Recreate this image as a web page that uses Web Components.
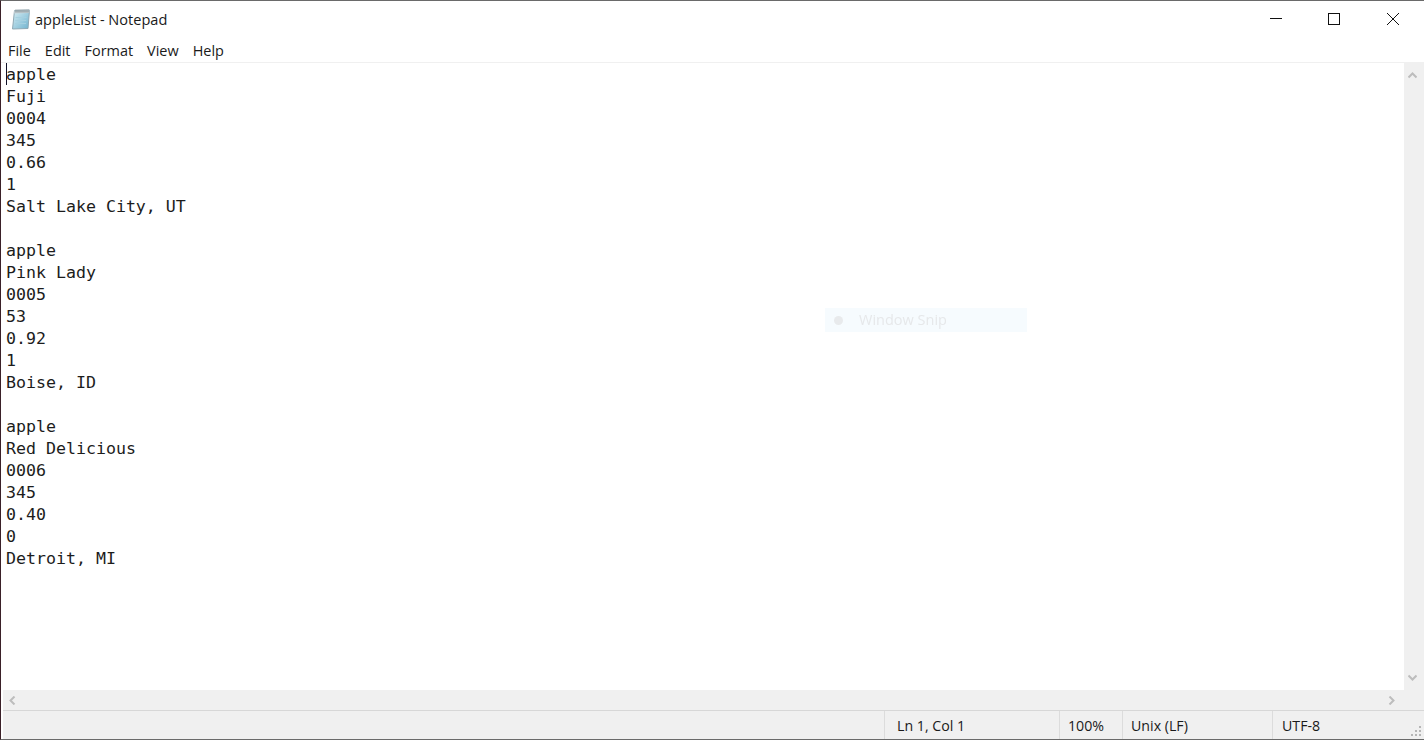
<!DOCTYPE html>
<html>
<head>
<meta charset="utf-8">
<title>appleList - Notepad</title>
<style>
  html, body { margin: 0; padding: 0; height: 100%; background: #fff; overflow: hidden; }
</style>
</head>
<body>
<notepad-window>
  <title-bar slot="title" label="appleList - Notepad"></title-bar>
  <menu-bar slot="menu">
    <span>File</span><span>Edit</span><span>Format</span><span>View</span><span>Help</span>
  </menu-bar>
  <text-area slot="editor">apple
Fuji
0004
345
0.66
1
Salt Lake City, UT

apple
Pink Lady
0005
53
0.92
1
Boise, ID

apple
Red Delicious
0006
345
0.40
0
Detroit, MI</text-area>
  <status-bar slot="status"></status-bar>
</notepad-window>

<script>
class NotepadWindow extends HTMLElement {
  constructor() {
    super();
    this.attachShadow({ mode: 'open' });
    this.shadowRoot.innerHTML = `
      <style>
        :host {
          display: flex;
          flex-direction: column;
          box-sizing: border-box;
          width: 1424px;
          height: 740px;
          border-top: 1px solid #6a6a6a;
          border-left: 1px solid #3a2028;
          border-bottom: 1px solid #6a6a6a;
          background: #fff;
          font-family: "Open Sans", "Noto Sans", sans-serif;
          color: #1a1a1a;
        }
      </style>
      <slot name="title"></slot>
      <slot name="menu"></slot>
      <slot name="editor"></slot>
      <slot name="status"></slot>
    `;
  }
}

class TitleBar extends HTMLElement {
  constructor() {
    super();
    this.attachShadow({ mode: 'open' });
    this.shadowRoot.innerHTML = `
      <style>
        :host {
          display: flex;
          align-items: center;
          height: 38px;
          flex: none;
        }
        .icon { margin-left: 10px; width: 20px; height: 22px; flex: none; position: relative; top: -1px; }
        .label { margin-left: 4px; font-size: 14.55px; position: relative; top: -1px; flex: 1; }
        .btns { display: flex; height: 36px; align-self: flex-start; padding-right: 2px; }
        .btn { display: flex; align-items: center; justify-content: center; }
        .btn svg { width: 14px; height: 14px; }
      </style>
      <svg class="icon" viewBox="0 0 20 22">
        <defs>
          <linearGradient id="page" x1="0" y1="0" x2="1" y2="1">
            <stop offset="0" stop-color="#d8eff5"/>
            <stop offset="1" stop-color="#6fb2ce"/>
          </linearGradient>
        </defs>
        <path d="M3.5 2.5 L18.5 2 L17 20.5 L1.5 21 Z" fill="url(#page)" stroke="#8fa9b5" stroke-width="1"/>
        <path d="M3.5 2.5 L18.5 2 L18.2 5 L3.2 5.5 Z" fill="#c9d4d8"/>
        <path d="M5 1.5v3M7 1.5v3M9 1.5v3M11 1.5v3M13 1.5v3M15 1.5v3M17 1.5v3" stroke="#7d8a90" stroke-width="1"/>
        <path d="M4.5 9.5H15.5M4.2 12.5H15.2M4 15.5H15" stroke="#a5d0e0" stroke-width="1"/>
      </svg>
      <span class="label"></span>
      <div class="btns">
        <div class="btn" style="width:56px"><svg viewBox="0 0 14 14"><path d="M1 6.5H13" stroke="#111" stroke-width="1" fill="none"/></svg></div>
        <div class="btn" style="width:60px"><svg viewBox="0 0 14 14"><rect x="1.5" y="1.5" width="11" height="11" stroke="#111" stroke-width="1" fill="none"/></svg></div>
        <div class="btn" style="width:58px"><svg viewBox="0 0 14 14"><path d="M1 1L13 13M13 1L1 13" stroke="#111" stroke-width="1" fill="none"/></svg></div>
      </div>
    `;
    this.shadowRoot.querySelector('.label').textContent = this.getAttribute('label');
  }
}

class MenuBar extends HTMLElement {
  constructor() {
    super();
    this.attachShadow({ mode: 'open' });
    this.shadowRoot.innerHTML = `
      <style>
        :host {
          display: flex;
          flex: none;
          align-items: center;
          height: 23px;
          padding-left: 7px;
          gap: 14px;
          font-size: 14.45px;
          border-bottom: 1px solid #f0f0f0;
        }
      </style>
      <slot></slot>
    `;
  }
}

class TextArea extends HTMLElement {
  constructor() {
    super();
    this.attachShadow({ mode: 'open' });
    this.shadowRoot.innerHTML = `
      <style>
        :host {
          display: grid;
          flex: 1;
          min-height: 0;
          grid-template-columns: 1fr 20px;
          grid-template-rows: 1fr 20px;
        }
        .text {
          position: relative;
          padding: 1px 0 0 5px;
          overflow: hidden;
          font-family: "DejaVu Sans Mono", "Liberation Mono", monospace;
          font-size: 16.6px;
          line-height: 22px;
          white-space: pre;
          color: #1c1c1c;
        }
        .caret { position: absolute; left: 5px; top: 0; width: 1px; height: 22px; background: #101028; }
        .snip {
          position: absolute;
          left: 824px;
          top: 245px;
          width: 202px;
          height: 24px;
          display: flex;
          align-items: center;
          background: #f6fbfe;
          font-family: "Open Sans", sans-serif;
          font-size: 14.5px;
          line-height: 24px;
          color: #e6e8ea;
        }
        .snip span { filter: blur(0.6px); }
        .dot { width: 9px; height: 9px; border-radius: 50%; background: #e8eaec; margin: 0 16px 0 9px; }
        .vbar, .hbar, .corner { background: #f0f0f0; }
        .vbar { display: flex; flex-direction: column; justify-content: space-between; align-items: center; padding: 8px 3px 8px 0; box-sizing: border-box; }
        .hbar { display: flex; justify-content: space-between; align-items: center; padding: 0 8px 0 5px; margin-left: 2px; }
        svg { display: block; width: 9px; height: 9px; }
      </style>
      <div class="text"><span class="caret"></span><slot></slot><div class="snip"><span class="dot"></span><span>Window Snip</span></div></div>
      <div class="vbar">
        <svg viewBox="0 0 9 9"><path d="M0.5 6.5L4.5 2.5L8.5 6.5" stroke="#bdbdbd" stroke-width="2" fill="none"/></svg>
        <svg viewBox="0 0 9 9"><path d="M0.5 2.5L4.5 6.5L8.5 2.5" stroke="#bdbdbd" stroke-width="2" fill="none"/></svg>
      </div>
      <div class="hbar">
        <svg viewBox="0 0 9 9"><path d="M6.5 0.5L2.5 4.5L6.5 8.5" stroke="#bdbdbd" stroke-width="2" fill="none"/></svg>
        <svg viewBox="0 0 9 9"><path d="M2.5 0.5L6.5 4.5L2.5 8.5" stroke="#bdbdbd" stroke-width="2" fill="none"/></svg>
      </div>
      <div class="corner"></div>
    `;
  }
}

class StatusBar extends HTMLElement {
  constructor() {
    super();
    this.attachShadow({ mode: 'open' });
    this.shadowRoot.innerHTML = `
      <style>
        :host {
          display: flex;
          flex: none;
          height: 29px;
          box-sizing: border-box;
          background: #f0f0f0;
          border-top: 1px solid #d7d7d7;
          font-size: 14.2px;
          margin-left: 2px;
          padding-left: 881px;
          position: relative;
        }
        .cell { display: flex; align-items: center; border-left: 1px solid #dcdcdc; box-sizing: border-box; }
        .grip { position: absolute; right: 2px; bottom: 2px; width: 12px; height: 12px; }
      </style>
      <div class="cell" style="width:175px;padding-left:12px">Ln 1, Col 1</div>
      <div class="cell" style="width:63px;padding-left:8px">100%</div>
      <div class="cell" style="width:150px;padding-left:8px">Unix (LF)</div>
      <div class="cell" style="padding-left:9px">UTF-8</div>
      <svg class="grip" viewBox="0 0 12 12" fill="#b5b5b5">
        <rect x="9" y="1" width="2" height="2"/>
        <rect x="5" y="5" width="2" height="2"/><rect x="9" y="5" width="2" height="2"/>
        <rect x="1" y="9" width="2" height="2"/><rect x="5" y="9" width="2" height="2"/><rect x="9" y="9" width="2" height="2"/>
      </svg>
    `;
  }
}

customElements.define('notepad-window', NotepadWindow);
customElements.define('title-bar', TitleBar);
customElements.define('menu-bar', MenuBar);
customElements.define('text-area', TextArea);
customElements.define('status-bar', StatusBar);
</script>
</body>
</html>
